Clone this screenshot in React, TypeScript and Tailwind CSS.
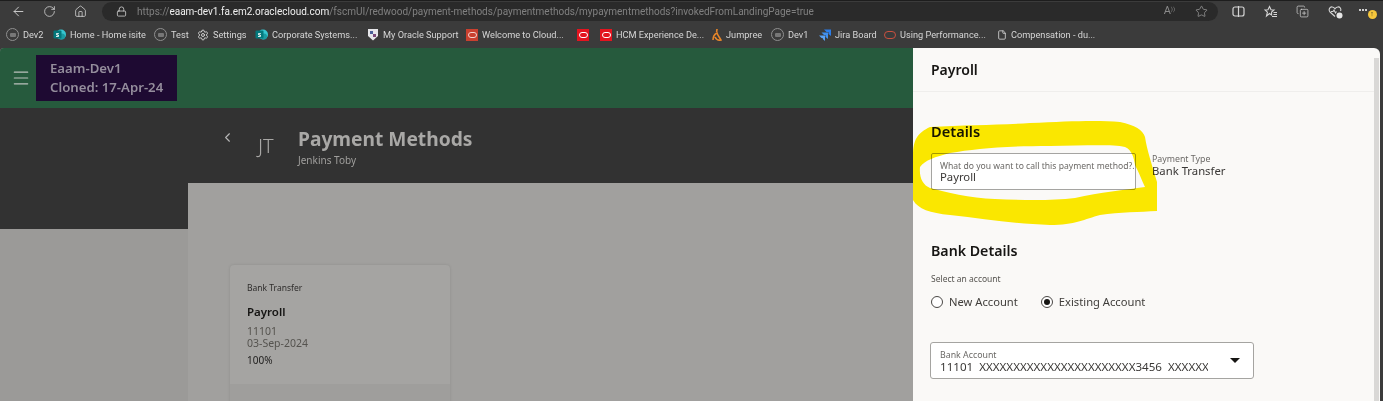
import { ArrowLeft, ChevronLeft, File, Home, Lock, Menu, RotateCw, Settings, Star, CopyPlus } from "lucide-react";

function GlobeDot() {
  return (
    <span className="w-[13px] h-[13px] shrink-0 rounded-full border border-[#8f8f8f] flex items-center justify-center">
      <span className="w-[6px] h-[4px] rounded-[1px] bg-[#777]" />
    </span>
  );
}

function SharePoint() {
  return (
    <svg width="13" height="13" viewBox="0 0 13 13" className="shrink-0">
      <circle cx="8" cy="6.5" r="5" fill="#37c6d0" />
      <circle cx="9" cy="8.5" r="3" fill="#1a9ba1" />
      <rect x="0.5" y="2.5" width="8" height="8" rx="1" fill="#03787c" />
      <text x="4.5" y="9" fontSize="7" fontWeight="700" fill="#fff" textAnchor="middle" fontFamily="Noto Sans, sans-serif">s</text>
    </svg>
  );
}

function OracleSquare() {
  return (
    <span className="w-[12px] h-[12px] shrink-0 bg-[#e3141f] flex items-center justify-center">
      <span className="w-[9px] h-[6px] rounded-[3px] border border-white" />
    </span>
  );
}

function OracleMuted() {
  return (
    <span className="w-[12px] h-[12px] shrink-0 bg-[#c9402f] flex items-center justify-center">
      <span className="w-[9px] h-[6px] rounded-[3px] border border-[#f3d3cd]" />
    </span>
  );
}

function OracleRing() {
  return <span className="w-[12px] h-[8px] shrink-0 rounded-[4px] border-[1.5px] border-[#c9503f]" />;
}

function Jumpree() {
  return (
    <svg width="10" height="14" viewBox="0 0 10 14" fill="none" stroke="#e8862a" strokeWidth="1.6" className="shrink-0">
      <path d="M5 1 L4.6 4" />
      <path d="M1 12 C1 8 3 6 5 5 C6 8 8 10 9 12 C6 13 4 11 3 9" />
    </svg>
  );
}

function Jira() {
  return (
    <svg width="12" height="12" viewBox="0 0 12 12" fill="#2b7de9" className="shrink-0">
      <path d="M5 0.5 H12 V7 L9.5 5 V3 H7.5 Z" />
      <path d="M2.5 3.5 H9 V10 L6.5 8 V6 H5 Z" fill="#3f8ff0" />
      <path d="M0 6.5 H6 V12 L3.8 10 V9 H2.5 Z" fill="#5aa2f5" />
    </svg>
  );
}

function MyOracle() {
  return (
    <svg width="12" height="13" viewBox="0 0 12 13" className="shrink-0">
      <path d="M1 1 H11 V8 L6 12.5 L1 8 Z" fill="#e6e6ea" />
      <rect x="3" y="3" width="3" height="3" fill="#4a5f9a" />
      <rect x="6" y="6" width="3" height="3" fill="#7a4a7a" />
    </svg>
  );
}

const bookmarks = [
  { icon: <GlobeDot />, label: "Dev2", cls: "w-[47px]" },
  { icon: <SharePoint />, label: "Home - Home isite", cls: "w-[101px]" },
  { icon: <GlobeDot />, label: "Test", cls: "w-[43px]" },
  { icon: <Settings className="w-[12px] h-[12px] shrink-0 text-[#cfcfcf]" />, label: "Settings", cls: "w-[58px]" },
  { icon: <SharePoint />, label: "Corporate Systems...", cls: "w-[112px]" },
  { icon: <MyOracle />, label: "My Oracle Support", cls: "w-[99px]" },
  { icon: <OracleMuted />, label: "Welcome to Cloud...", cls: "w-[111px]" },
  { icon: <OracleSquare />, label: "", cls: "w-[23px]" },
  { icon: <OracleSquare />, label: "HCM Experience De...", cls: "w-[112px]" },
  { icon: <Jumpree />, label: "Jumpree", cls: "w-[59px]" },
  { icon: <GlobeDot />, label: "Dev1", cls: "w-[48px]" },
  { icon: <Jira />, label: "Jira Board", cls: "w-[65px]" },
  { icon: <OracleRing />, label: "Using Performance...", cls: "w-[113px]" },
  { icon: <File className="w-[10px] h-[12px] shrink-0 text-[#d5d5d5]" />, label: "Compensation - du...", cls: "w-[100px]" },
];

function Toolbar() {
  return (
    <div className="h-[48px] shrink-0 bg-[#3b3b3b] text-[#d6d6d6] font-['Roboto',sans-serif]">
      <div className="h-[22px] flex items-center border-t border-[#1d1d1d]">
        <div className="w-[102px] flex items-center shrink-0 text-[#d0d0d0]">
          <ArrowLeft className="w-[15px] h-[15px] ml-[11px]" strokeWidth={1.5} />
          <RotateCw className="w-[13px] h-[13px] ml-[17px]" strokeWidth={1.5} />
          <Home className="w-[13px] h-[13px] ml-[18px]" strokeWidth={1.5} />
        </div>
        <div className="w-[1116px] h-[19px] rounded-full bg-[#2a2a2a] flex items-center pl-[14px] pr-[10px]">
          <Lock className="w-[11px] h-[11px] text-[#cfcfcf]" strokeWidth={1.8} />
          <div className="ml-[10px] flex-1 text-[10px] whitespace-nowrap text-[#808080]">
            https://<span className="text-[#f0f0f0]">eaam-dev1.fa.em2.oraclecloud.com</span>/fscmUI/redwood/payment-methods/paymentmethods/mypaymentmethods?invokedFromLandingPage=true
          </div>
          <span className="text-[11px] text-[#8a8a8a] mr-[20px]">A<sup className="text-[6px]">))</sup></span>
          <Star className="w-[13px] h-[13px] text-[#9a9a9a]" strokeWidth={1.4} />
        </div>
        <div className="flex items-center text-[#d5d5d5]">
          <svg className="ml-[14px]" width="13" height="13" viewBox="0 0 13 13" fill="none" stroke="currentColor" strokeWidth="1.2">
            <rect x="1" y="2" width="11" height="9" rx="2" />
            <path d="M6.5 1 V12" />
          </svg>
          <svg className="ml-[19px]" width="14" height="14" viewBox="0 0 14 14" fill="none" stroke="currentColor" strokeWidth="1.1">
            <path d="M5.5 1.5 L7 4.8 L10 5 L7.6 7 V10 L5.5 8.5 L2.5 11 L3.4 7.2 L1 5 L4 4.8 Z" />
            <path d="M9.5 7.5 H13 M9.5 9.5 H13 M8 11.5 H13" />
          </svg>
          <CopyPlus className="w-[13px] h-[13px] ml-[18px]" strokeWidth={1.3} />
          <svg className="ml-[19px]" width="15" height="14" viewBox="0 0 15 14" fill="none" stroke="currentColor" strokeWidth="1.1">
            <path d="M7 11.5 L2 7 C0 4.5 2 1.5 4.4 2 C5.6 2.2 6.5 3 7 3.8 C7.5 3 8.5 2.2 9.6 2 C12 1.5 13.5 4 12.5 6" />
            <path d="M3 6.5 H5 L6 5 L7.5 8 L8.5 6.5" />
            <circle cx="11.5" cy="10.5" r="3" fill="#e6e6e6" stroke="none" />
          </svg>
          <span className="ml-[16px] flex items-center gap-[1.5px] mb-[3px]">
            <span className="w-[1.5px] h-[1.5px] bg-white rounded-full" />
            <span className="w-[1.5px] h-[1.5px] bg-white rounded-full" />
            <span className="w-[1.5px] h-[1.5px] bg-white rounded-full" />
          </span>
          <span className="ml-[1px] mt-[5px] w-[9px] h-[9px] rounded-full bg-[#f5c63c] text-[#222] text-[7px] leading-[9px] text-center font-bold">↑</span>
        </div>
      </div>
      <div className="h-[26px] flex items-center pl-[6px]">
        {bookmarks.map((b, i) => (
          <div key={i} className={`${b.cls} shrink-0 flex items-center gap-[4px] text-[9.2px] whitespace-nowrap`}>
            {b.icon}
            {b.label && <span>{b.label}</span>}
          </div>
        ))}
      </div>
    </div>
  );
}

function Backdrop() {
  return (
    <div className="w-[913px] shrink-0 flex flex-col bg-[#9b9a98] rounded-tl-[4px] overflow-hidden font-['Noto_Sans',sans-serif]">
      <div className="h-[60px] shrink-0 bg-[#265a3d] flex items-center pl-[11px]">
        <Menu className="w-[20px] h-[20px] text-[#bcc1bd]" strokeWidth={1.4} />
        <div className="ml-[5px] w-[141px] h-[46px] bg-[#1e0a32] pl-[14px] flex flex-col justify-center text-[#948d9c] text-[13.2px] leading-[19px] font-semibold">
          <div>Eaam-Dev1</div>
          <div>Cloned: 17-Apr-24</div>
        </div>
      </div>
      <div className="h-[121px] shrink-0 bg-[#323232] flex items-start pl-[220px] pt-[19px]">
        <ChevronLeft className="w-[15px] h-[15px] mt-[3px] text-[#b5b5b5]" strokeWidth={1.8} />
        <div className="ml-[23px] mt-[7px] w-[40px] text-[20px] font-light text-[#a8a7a5] leading-[24px]">JT</div>
        <div>
          <div className="text-[19.2px] leading-[24px] font-bold text-[#a9a8a6]">Payment Methods</div>
          <div className="text-[10px] leading-[14px] mt-[2px] text-[#a09f9d]">Jenkins Toby</div>
        </div>
      </div>
      <div className="-mt-[46px] ml-[188px] flex-1 bg-[#a1a09e] pl-[42px] pt-[82px]">
        <div className="w-[220px] h-[200px] rounded-t-[4px] bg-[#a5a4a2] shadow-[0_0_3px_rgba(0,0,0,0.12)] overflow-hidden">
          <div className="h-[119px] pl-[17px] pt-[16px]">
            <div className="text-[8.5px] leading-[14px] text-[#2f2d2c]">Bank Transfer</div>
            <div className="mt-[9px] text-[11.5px] leading-[16px] font-semibold text-[#151413]">Payroll</div>
            <div className="mt-[5px] text-[10.5px] leading-[12px] text-[#55534f]">11101</div>
            <div className="text-[10.5px] leading-[12px] text-[#55534f]">03-Sep-2024</div>
            <div className="mt-[4px] text-[10px] leading-[14px] text-[#222120]">100%</div>
          </div>
          <div className="h-[81px] bg-[#9f9e9c]" />
        </div>
      </div>
    </div>
  );
}

function Radio({ checked, label }: { checked?: boolean; label: string }) {
  return (
    <div className="flex items-center gap-[6px] text-[11.2px] text-[#3f3d3a]">
      <span className="w-[12px] h-[12px] rounded-full border border-[#4a4845] bg-white flex items-center justify-center">
        {checked && <span className="w-[6px] h-[6px] rounded-full bg-[#161513]" />}
      </span>
      {label}
    </div>
  );
}

function Drawer() {
  return (
    <div className="w-[467px] shrink-0 bg-[#faf9f7] rounded-tr-[6px] flex font-['Noto_Sans',sans-serif] text-[#161513]">
      <div className="flex-1">
        <div className="h-[44px] border-b border-[#efeeec] pl-[18px] flex items-center text-[14px] font-semibold">Payroll</div>
        <div className="pl-[18px] pt-[29px]">
          <div className="text-[14.6px] leading-[20px] font-semibold">Details</div>
          <div className="mt-[12px] flex items-start">
            <div className="w-[205px] h-[37px] bg-white border border-[#a5a4a1] rounded-[2px] pl-[8px] pt-[7px]">
              <div className="text-[8.6px] leading-[10px] text-[#6b6966] whitespace-nowrap">What do you want to call this payment method?.</div>
              <div className="text-[11.3px] leading-[12px] text-[#3a3836]">Payroll</div>
            </div>
            <div className="ml-[16px] pt-[1px]">
              <div className="text-[8.8px] leading-[10px] text-[#6b6966]">Payment Type</div>
              <div className="text-[11.3px] leading-[14px] text-[#3a3836]">Bank Transfer</div>
            </div>
          </div>
          <div className="mt-[51px] text-[14.2px] leading-[20px] font-semibold">Bank Details</div>
          <div className="mt-[12px] text-[8.5px] leading-[12px] text-[#55534f]">Select an account</div>
          <div className="mt-[9px] flex gap-[23px]">
            <Radio label="New Account" />
            <Radio checked label="Existing Account" />
          </div>
          <div className="mt-[31px] -ml-[1px] w-[324px] h-[37px] bg-white border border-[#a5a4a1] rounded-[3px] pl-[9px] pt-[8px] flex">
            <div className="w-[268px]">
              <div className="text-[8.8px] leading-[9px] text-[#6b6966]">Bank Account</div>
              <div className="overflow-hidden text-[11.6px] leading-[14px] text-[#3a3836] whitespace-pre">11101  XXXXXXXXXXXXXXXXXXXXXXX3456  XXXXXXXXXX</div>
            </div>
            <span className="ml-[22px] mt-[7px] w-0 h-0 border-x-[5px] border-x-transparent border-t-[5px] border-t-[#161513]" />
          </div>
        </div>
      </div>
      <div className="w-[5px] mr-[1px] mt-[10px] bg-[#d9d8d6]" />
    </div>
  );
}

export default function App() {
  return (
    <div className="relative w-[1390px] h-[401px] bg-white overflow-hidden">
      <div className="w-[1383px] h-[401px] flex flex-col bg-[#3b3b3b]">
        <Toolbar />
        <div className="flex-1 flex overflow-hidden">
          <Backdrop />
          <Drawer />
        </div>
      </div>
      {/* marker scribble drawn over the form, text shows through */}
      <svg className="absolute left-0 top-0 mix-blend-multiply pointer-events-none" width="1390" height="401" viewBox="0 0 1390 401">
        <path
          fill="#ffed00"
          fillRule="evenodd"
          d="M913 153 C914 138 918 133 930 127 C965 125 1000 125 1030 123 C1070 121 1100 120 1120 122 C1135 125 1143 130 1145 137 C1147 150 1152 165 1157 182 L1157 211 C1140 212 1120 212 1100 215 C1085 219 1075 225 1050 225 C1015 224 985 219 950 215 C930 213 918 209 913 200 Z M920 167 C925 160 935 157 950 153 C975 149 1000 146 1050 146 C1080 146 1110 144 1125 147 C1132 150 1134 158 1135 165 C1140 175 1143 183 1145 187 C1125 190 1100 192 1075 198 C1050 201 1020 200 995 199 C970 198 945 192 930 188 C923 185 919 178 920 167 Z"
        />
      </svg>
    </div>
  );
}
